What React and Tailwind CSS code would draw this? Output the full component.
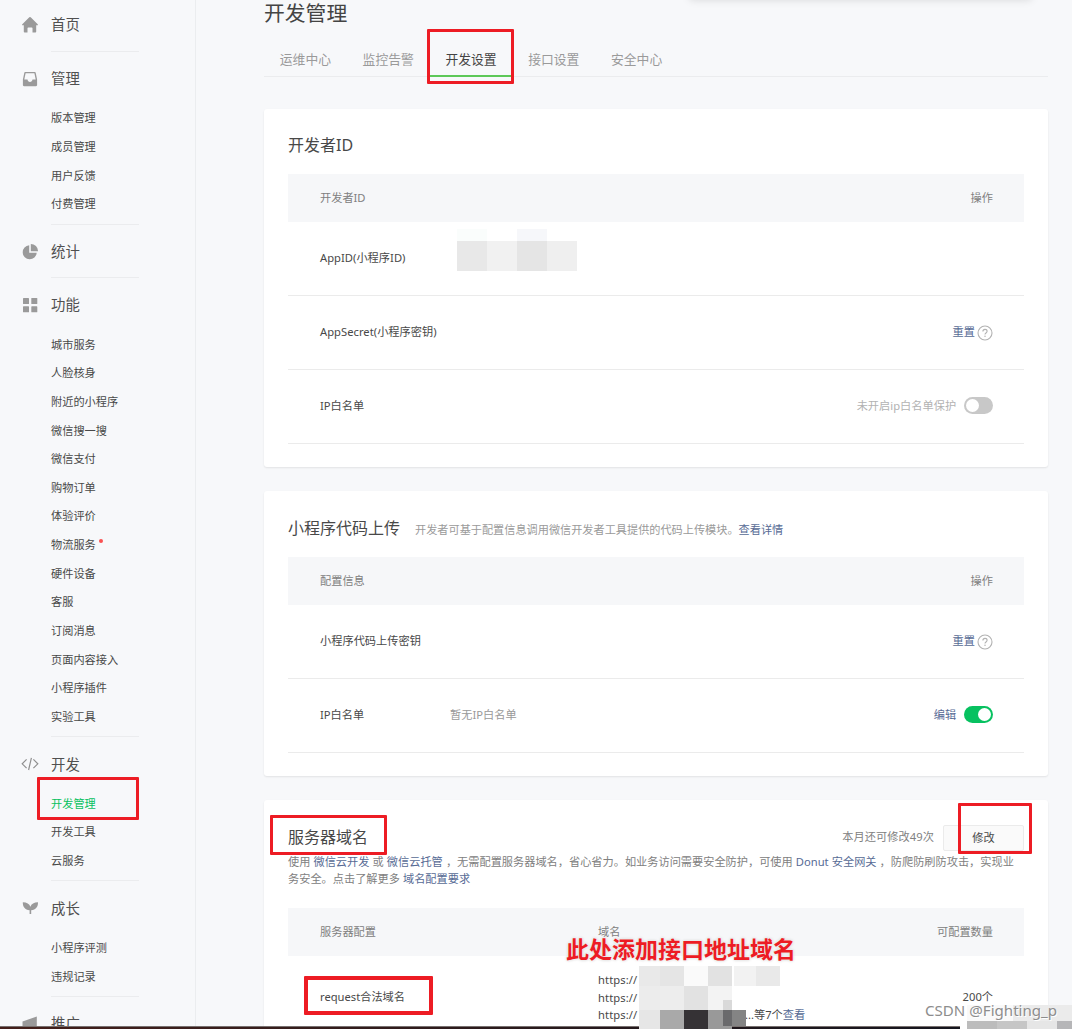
import React from "react";

const sections = [
  { icon: "home", title: "首页", items: [] },
  { icon: "inbox", title: "管理", items: ["版本管理", "成员管理", "用户反馈", "付费管理"] },
  { icon: "pie", title: "统计", items: [] },
  {
    icon: "grid",
    title: "功能",
    items: [
      "城市服务", "人脸核身", "附近的小程序", "微信搜一搜", "微信支付", "购物订单", "体验评价",
      "物流服务", "硬件设备", "客服", "订阅消息", "页面内容接入", "小程序插件", "实验工具",
    ],
  },
  { icon: "code", title: "开发", items: ["开发管理", "开发工具", "云服务"] },
  { icon: "sprout", title: "成长", items: ["小程序评测", "违规记录"] },
  { icon: "flag", title: "推广", items: [] },
];

function SideIcon({ name }) {
  return (
    <svg width="18" height="18" viewBox="0 0 18 18" fill="#9a9a9a" className="shrink-0">
      {name === "home" && <path d="M9 .9a1 1 0 0 1 .7.3l7 7c.5.5.3 1.1-.4 1.1h-1.1v6.4c0 .5-.3.8-.8.8h-2.9v-4.2a.8.8 0 0 0-.8-.8H7.3a.8.8 0 0 0-.8.8v4.2H3.6c-.5 0-.8-.3-.8-.8V9.300H1.700c-.7 0-.9-.6-.4-1.100l7-7A1 1 0 0 1 9 .9z" />}
      {name === "inbox" && (
        <path fillRule="evenodd" d="M4.200 2h9.600c.5 0 .8.3.9.7l1.400 6.800v5.600c0 .7-.4 1.100-1.100 1.100H3c-.7 0-1.100-.4-1.100-1.100V9.500l1.400-6.800c.1-.4.4-.7.9-.7zm.4 1.300L3.300 9.500h3.200c.2 1.500 1.100 2.500 2.500 2.500s2.300-1 2.500-2.500h3.200l-1.300-6.200z" />
      )}
      {name === "pie" && (
        <g>
          <path d="M8.200 2.300v7.500h7.500a7 7 0 1 1-7.500-7.500z" />
          <path d="M9.800.9a7.400 7.400 0 0 1 7.300 7.300H9.800z" />
        </g>
      )}
      {name === "grid" && (
        <g>
          <rect x="2" y="2" width="6" height="6" rx=".6" />
          <rect x="10.300" y="2" width="6" height="6" rx=".6" />
          <rect x="2" y="10.300" width="6" height="6" rx=".6" />
          <rect x="10.300" y="10.300" width="6" height="6" rx=".6" />
        </g>
      )}
      {name === "code" && (
        <path fill="none" stroke="#8f8f8f" strokeWidth="1.200" d="M5.600 4.400 1.200 8.800l4.400 4.400M12.400 4.400l4.400 4.400-4.400 4.400M10.400 2.800 7.600 15" />
      )}
      {name === "sprout" && (
        <path d="M1.800 3.200c4 .1 6.600 1.500 7.600 4.600 1-3.100 3.600-4.500 7.600-4.600.1 4.700-2.200 7.600-6.800 8v3.700H8.600v-3.700C4 10.800 1.700 7.900 1.800 3.200z" />
      )}
      {name === "flag" && <path d="M1.500 6.500 15.800 1.500v15.500H1.500z" />}
    </svg>
  );
}

function Sidebar() {
  return (
    <aside className="h-full w-[196px] shrink-0 border-r border-[#ebedef] pl-[21px]">
      <div className="-mt-[1.8px]">
        {sections.map((s) => (
          <section key={s.title}>
            <div className="flex h-[52.2px] items-center gap-3 pt-[2px] text-[14.4px] text-[#505050]">
              <SideIcon name={s.icon} />
              <span>{s.title}</span>
            </div>
            <ul className="ml-[30px] text-[11.2px] text-[#484848]">
              {s.items.map((t) => (
                <li key={t} className={"flex h-[28.65px] items-center pt-[0.8px] " + (t === "开发管理" ? "text-[#07c160]" : "")}>
                  {t}
                  {t === "物流服务" && <i className="mb-[9px] ml-[3px] size-[4px] rounded-full bg-[#fa5151]" />}
                </li>
              ))}
            </ul>
            <div className={"ml-[30px] w-[88px] border-b border-[#ebecee] " + (s.items.length ? "h-[6px]" : "h-[1.4px]")} />
          </section>
        ))}
      </div>
    </aside>
  );
}

const tabs = ["运维中心", "监控告警", "开发设置", "接口设置", "安全中心"];

function Tabs() {
  return (
    <nav className="flex h-[34px] shrink-0 border-b border-[#ebecee] text-[12.8px] text-[#9a9a9a]">
      {tabs.map((t) => (
        <span
          key={t}
          className={
            "flex h-[34px] w-[82.8px] shrink-0 items-center justify-center border-b-2 pt-[2px] " +
            (t === "开发设置" ? "border-[#5dc858] text-[#444]" : "border-transparent")
          }
        >
          {t}
        </span>
      ))}
    </nav>
  );
}

function Card({ className, children }) {
  return (
    <section className={"shrink-0 rounded-[3px] bg-white px-6 shadow-[0_1px_2px_rgba(0,0,0,0.09)] " + className}>
      {children}
    </section>
  );
}

function TableHead({ children }) {
  return <div className="flex h-[47.5px] items-center justify-between bg-[#f6f7f9] pt-px pr-[31px] pl-8 text-[#808080]">{children}</div>;
}

function Row({ children }) {
  return <div className="flex h-[74px] items-center border-b border-[#ebebeb] pr-[31px] pl-8 tracking-[0.03px]">{children}</div>;
}

function Help() {
  return (
    <svg width="16" height="16" viewBox="0 0 16 16" fill="none" stroke="#b2b2b2" className="mt-[2px] ml-[2px]">
      <circle cx="8" cy="8" r="7" strokeWidth="1.100" />
      <path d="M5.900 6.500c0-1.300.9-2.100 2.100-2.100s2.100.8 2.100 1.900c0 1.600-2.100 1.700-2.100 3.200" strokeWidth="1.100" />
      <circle cx="8" cy="11.300" r=".75" fill="#b2b2b2" stroke="none" />
    </svg>
  );
}

function Switch({ on }) {
  return (
    <span className={"-mt-px ml-2 flex h-[16.400px] w-[28.800px] items-center rounded-full px-[1.800px] " + (on ? "justify-end bg-[#07c160]" : "bg-[#c8c8c8]")}>
      <i className="size-[12.800px] rounded-full bg-white" />
    </span>
  );
}

function Link({ children }) {
  return <a className="text-[#576b95]">{children}</a>;
}

function Mark({ className }) {
  return <div className={"absolute rounded-[1px] border-[#ed1c24] " + className} />;
}

export default function App() {
  return (
    <div className="relative flex h-[1029px] w-[1072px] overflow-hidden bg-[#f7f8fa] font-['Noto_Sans','Noto_Sans_CJK_SC',sans-serif] text-[11.2px] text-[#484848]">
      <Sidebar />
      <main className="ml-[68px] flex w-[784px] flex-col">
        <h1 className="flex h-[43px] shrink-0 items-start text-[20.8px] leading-[26px] text-[#444]">开发管理</h1>
        <Tabs />

        <Card className="mt-8 h-[358px]">
          <h2 className="flex h-[65px] items-center pt-[7px] text-[16px]">开发者ID</h2>
          <TableHead>
            <span>开发者ID</span>
            <span>操作</span>
          </TableHead>
          <Row>
            AppID(小程序ID)
            {/* Masked AppID */}
            <div className="-mt-[16px] mr-[416px] ml-auto grid grid-cols-[30px_30px_30px_30px] grid-rows-[12px_30px]">
              <i className="bg-[#fafdfc]" />
              <i />
              <i className="bg-[#f6f7fa]" />
              <i />
              <i className="bg-[#e8e8e8]" />
              <i className="bg-[#f1f1f1]" />
              <i className="bg-[#e5e5e5]" />
              <i className="bg-[#efefef]" />
            </div>
          </Row>
          <Row>
            AppSecret(小程序密钥)
            <span className="ml-auto"><Link>重置</Link></span>
            <Help />
          </Row>
          <Row>
            IP白名单
            <span className="ml-auto text-[#b2b2b2]">未开启ip白名单保护</span>
            <Switch />
          </Row>
        </Card>

        <Card className="mt-6 h-[285px]">
          <h2 className="flex h-[66px] items-center pt-[7px] text-[16px]">
            小程序代码上传
            <span className="ml-[15px] flex pt-[5px] text-[11.17px] text-[#9a9a9a]">
              开发者可基于配置信息调用微信开发者工具提供的代码上传模块。
              <Link>查看详情</Link>
            </span>
          </h2>
          <TableHead>
            <span>配置信息</span>
            <span>操作</span>
          </TableHead>
          <Row>
            小程序代码上传密钥
            <span className="ml-auto"><Link>重置</Link></span>
            <Help />
          </Row>
          <Row>
            <span className="w-[130px]">IP白名单</span>
            <span className="text-[#999]">暂无IP白名单</span>
            <span className="ml-auto"><Link>编辑</Link></span>
            <Switch on />
          </Row>
        </Card>

        <Card className="mt-6 h-[260px]">
          <div className="flex h-[52px] items-center pt-[22px]">
            <h2 className="text-[16px]">服务器域名</h2>
            <span className="ml-auto tracking-[0.08px] text-[#808080]">本月还可修改49次</span>
            <button className="mt-[2px] ml-[9px] h-[26px] w-[81px] rounded-[2px] border border-[#ebebeb] bg-[#fafafa]">修改</button>
          </div>
          <p className="h-[56px] w-[736px] pt-[0.6px] leading-[17.6px] whitespace-nowrap text-[#808080] [word-spacing:0.2px]">
            使用 <Link>微信云开发</Link> 或 <Link>微信云托管</Link> ，无需配置服务器域名，省心省力。如业务访问需要安全防护，可使用 <Link>Donut 安全网关</Link> ，防爬防刷防攻击，实现业
            <br />
            务安全。点击了解更多 <Link>域名配置要求</Link>
          </p>
          <TableHead>
            <span className="w-[278px]">服务器配置</span>
            <span>域名</span>
            <span className="ml-auto">可配置数量</span>
          </TableHead>
          <div className="flex h-[84px] items-center pr-[31px] pl-8">
            <span className="w-[278px]">request合法域名</span>
            <div className="leading-[17.9px] tracking-[0.1px]">
              <p>https://</p>
              <p>https://</p>
              <p className="flex tracking-normal"><span className="w-[147px] tracking-[0.1px]">https://</span>...等7个<Link>查看</Link></p>
            </div>
            <span className="ml-auto">200个</span>
          </div>
        </Card>
      </main>

      {/* Shadow of the panel above the fold */}
      <div className="absolute -top-[20px] left-[689px] h-[20px] w-[343px] rounded bg-white shadow-[0_0_8px_rgba(0,0,0,0.13)]" />

      {/* Taskbar sliver */}
      <div className="absolute top-[1026px] left-0 h-[3px] w-[960px] border-t border-[#77706f] bg-gradient-to-r from-[#431f1a] to-[#15151d]" />

      {/* Masked domains */}
      <div className="absolute top-[966px] left-[639px] flex flex-col">
        <div className="flex h-[20px]">
          <i className="w-[21px] bg-[#e9e9e9]" />
          <i className="w-[24px] bg-[#e5e5e5]" />
          <i className="w-[24px] bg-[#fafafa]" />
          <i className="w-[24px] bg-[#e2e2e2]" />
          <i className="ml-[2px] w-[22px] bg-[#f2f2f2]" />
          <i className="w-[24px] bg-[#e9e9e9]" />
        </div>
        <div className="flex h-[24px]">
          <i className="w-[21px] bg-[#ececec]" />
          <i className="w-[24px] bg-[#ededed]" />
          <i className="w-[24px] bg-[#e2e2e2]" />
          <i className="flex w-[24px] items-end justify-end bg-[#f3f3f3]">
            <i className="h-[10px] w-[9px] bg-[#d9d9d9]" />
          </i>
        </div>
        <div className="flex h-[19px]">
          <i className="w-[21px] bg-[#e6e6e6]" />
          <i className="w-[24px] bg-[#a9a9a9]" />
          <i className="w-[24px] bg-[#353235]" />
          <i className="flex w-[24px] justify-end bg-[#999999]">
            <i className="h-[16px] w-[9px] bg-[#6a6a6c]" />
          </i>
          <i className="h-[16px] w-[14px] bg-[#848484]" />
        </div>
      </div>

      {/* Masked corner */}
      <div className="absolute right-0 bottom-0 flex w-[112px] flex-col">
        <div className="flex h-[16px] pl-[7px]">
          <i className="w-[46px] bg-[#f9f9f9]" />
          <i className="w-[59px] bg-[#ebebeb]" />
        </div>
        <div className="flex h-[8px]">
          <i className="w-[7px] bg-white" />
          <i className="w-[30px] bg-[#bcbcbc]" />
          <i className="w-[30px] bg-[#c6c6c6]" />
          <i className="w-[30px] bg-[#e6e6e6]" />
          <i className="w-[15px] bg-[#b6b6b8]" />
        </div>
      </div>

      {/* Annotation frames */}
      <Mark className="top-[29px] left-[427px] h-[55px] w-[87px] border-3" />
      <Mark className="top-[777px] left-[37px] h-[43px] w-[102px] border-3" />
      <Mark className="top-[815px] left-[270px] h-[40px] w-[117px] border-3" />
      <Mark className="top-[803px] left-[958px] h-[51px] w-[74px] border-3" />
      <Mark className="top-[976px] left-[304px] h-[39px] w-[129px] border-4" />
      <div className="absolute top-[935px] left-[566px] text-[23px] leading-[28px] font-bold whitespace-nowrap text-[#ed1c24] [text-shadow:0_0_2px_#fff,0_0_3px_#bbb]">
        此处添加接口地址域名
      </div>
      <div className="absolute top-[999px] left-[925px] text-[15.1px] leading-[22px] whitespace-nowrap text-[#8d8d8d] [text-shadow:1px_1px_0_#fff]">
        CSDN @Fighting_p
      </div>
    </div>
  );
}
